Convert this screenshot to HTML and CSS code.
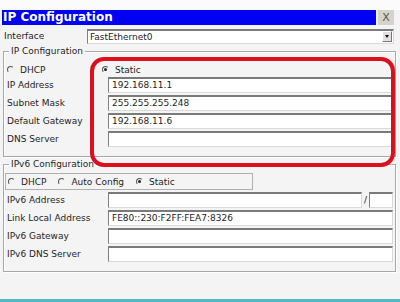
FILE: index.html
```html
<!DOCTYPE html>
<html>
<head>
<meta charset="utf-8">
<link rel="stylesheet" href="styles.css">
</head>
<body>
<div class="window">
  <div class="titlebar">
    <div class="title">IP Configuration</div>
    <div class="close">X</div>
  </div>
  <div class="iface">
    <span class="iface-label">Interface</span>
    <div class="select"><span class="select-text">FastEthernet0</span><span class="arrow"></span></div>
  </div>
  <fieldset class="group ipv4">
    <legend>IP Configuration</legend>
    <div class="radios v4">
      <span class="opt"><span class="radio"></span>DHCP</span>
      <span class="opt static"><span class="radio on"></span>Static</span>
    </div>
    <div class="field"><span class="label">IP Address</span><div class="input">192.168.11.1</div></div>
    <div class="field"><span class="label">Subnet Mask</span><div class="input">255.255.255.248</div></div>
    <div class="field"><span class="label">Default Gateway</span><div class="input">192.168.11.6</div></div>
    <div class="field"><span class="label">DNS Server</span><div class="input"></div></div>
  </fieldset>
  <fieldset class="group ipv6">
    <legend>IPv6 Configuration</legend>
    <div class="radios v6">
      <span class="opt"><span class="radio"></span>DHCP</span>
      <span class="opt"><span class="radio"></span>Auto Config</span>
      <span class="opt"><span class="radio on"></span>Static</span>
    </div>
    <div class="field"><span class="label">IPv6 Address</span><div class="input"></div><span class="slash">/</span><div class="input prefix"></div></div>
    <div class="field"><span class="label">Link Local Address</span><div class="input">FE80::230:F2FF:FEA7:8326</div></div>
    <div class="field"><span class="label">IPv6 Gateway</span><div class="input"></div></div>
    <div class="field"><span class="label">IPv6 DNS Server</span><div class="input"></div></div>
  </fieldset>
  <div class="spacer"></div>
  <div class="bottom-bar"></div>
  <div class="highlight"></div>
</div>
</body>
</html>
```
FILE: styles.css
```css
* { box-sizing: border-box; }
html, body { margin: 0; padding: 0; }
body {
  width: 400px;
  height: 302px;
  overflow: hidden;
  background: #f4f4f4;
  font-family: "DejaVu Sans", Verdana, sans-serif;
  font-size: 9px;
  color: #1e1e1e;
}
.window {
  position: relative;
  width: 400px;
  height: 302px;
  padding-top: 10px;
  display: flex;
  flex-direction: column;
  background: linear-gradient(#fbfbfb 0, #fbfbfb 10px, #f4f4f4 10px);
}
.titlebar {
  display: flex;
  height: 15px;
  margin: 0 6px 0 2px;
  gap: 1px;
}
.title {
  flex: 1;
  background: #0000f2;
  color: #fff;
  font-weight: bold;
  font-size: 12px;
  line-height: 15px;
  padding-left: 1px;
}
.close {
  width: 17px;
  background: #d6d3cc;
  color: #555;
  font-size: 11px;
  line-height: 15px;
  text-align: center;
  border-left: 1px solid #eee;
}
.iface {
  display: flex;
  align-items: center;
  height: 16px;
  margin: 3px 6px 0 0;
}
.iface-label {
  width: 87px;
  padding-left: 4px;
}
.select {
  flex: 1;
  height: 15px;
  display: flex;
  align-items: center;
  background: #fff;
  border-top: 2px solid #7c7c7c;
  border-left: 1px solid #808080;
  border-right: 1px solid #d8d8d8;
  border-bottom: 1px solid #d8d8d8;
}
.select-text { flex: 1; padding-left: 2px; }
.arrow {
  width: 10px;
  height: 11px;
  margin-right: 1px;
  background: #e2e0dc;
  border: 1px solid;
  border-color: #fff #777 #777 #fff;
  position: relative;
}
.arrow::after {
  content: "";
  position: absolute;
  left: 2px;
  top: 3px;
  border-left: 2px solid transparent;
  border-right: 2px solid transparent;
  border-top: 3px solid #111;
}
.group {
  margin: 2px 4px 0 3px;
  padding: 5px 2px 9px 3px;
  border: 1px solid #a8a8a8;
  box-shadow: inset 1px 1px 0 #fff, 1px 1px 0 #fff;
  min-width: 0;
}
.group legend {
  padding: 0 2px;
  margin-left: 2px;
  line-height: 11px;
  height: 11px;
}
.ipv6 { margin-top: 2px; padding-top: 3px; padding-bottom: 9px; }
.radios {
  display: flex;
  align-items: center;
  height: 15px;
}
.opt {
  display: flex;
  align-items: center;
}
.radio {
  width: 7px;
  height: 7px;
  border-radius: 50%;
  border: 1px solid;
  border-color: #555 transparent transparent #555;
  margin-right: 6px;
  position: relative;
}
.radio.on::after {
  content: "";
  position: absolute;
  left: 1px;
  top: 1px;
  width: 3px;
  height: 3px;
  border-radius: 50%;
  background: #222;
}
.v4 .opt:first-child { width: 95px; }
.v6 {
  width: 248px;
  height: 17px;
  margin-left: -2px;
  padding-left: 2px;
  border: 1px solid #b0b0b0;
  gap: 12px;
}
.field {
  display: flex;
  align-items: center;
  height: 16px;
  margin-top: 2px;
}
.ipv4 .field:nth-of-type(2) { margin-top: 0; }
.label { width: 101px; flex: none; }
.input {
  flex: 1;
  height: 16px;
  line-height: 13px;
  padding-left: 3px;
  background: #fff;
  border-top: 2px solid #7a7a7a;
  border-left: 1px solid #808080;
  border-right: 1px solid #dadada;
  border-bottom: 1px solid #dadada;
  white-space: nowrap;
}
.slash { width: 7px; text-align: center; flex: none; }
.input.prefix { flex: none; width: 24px; }
.spacer { flex: 1; }
.bottom-bar {
  height: 3px;
  background: #55b6c6;
}
.highlight {
  position: absolute;
  left: 90px;
  top: 57px;
  width: 305px;
  height: 110px;
  border: 4px solid #dc0f1c;
  border-radius: 14px;
}
```
